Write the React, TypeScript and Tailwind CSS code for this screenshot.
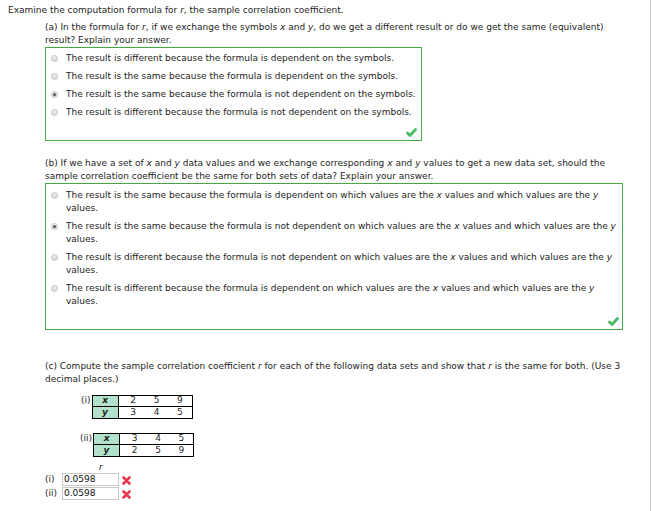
import React from 'react';

const optionsA = [
  { text: 'The result is different because the formula is dependent on the symbols.', checked: false },
  { text: 'The result is the same because the formula is dependent on the symbols.', checked: false },
  { text: 'The result is the same because the formula is not dependent on the symbols.', checked: true },
  { text: 'The result is different because the formula is not dependent on the symbols.', checked: false },
];

const optionsB = [
  { pre: 'The result is the same because the formula is dependent on which values are the ', checked: false },
  { pre: 'The result is the same because the formula is not dependent on which values are the ', checked: true },
  { pre: 'The result is different because the formula is not dependent on which values are the ', checked: false },
  { pre: 'The result is different because the formula is dependent on which values are the ', checked: false },
];

function Radio({ checked }: { checked: boolean }) {
  return (
    <span className="mt-[3px] flex h-[7px] w-[7px] shrink-0 items-center justify-center rounded-full border border-[#c4c4c4] bg-gradient-to-b from-[#f2f2f2] to-[#d6d6d6]">
      {checked && <span className="h-[3px] w-[3px] rounded-full bg-[#555]" />}
    </span>
  );
}

function Check() {
  return (
    <svg width="11" height="9" viewBox="0 0 11 9">
      <path d="M1.5 5 L4 7.5 L9.5 1.5" fill="none" stroke="#4cbb64" strokeWidth="2.8" strokeLinecap="round" strokeLinejoin="round" />
    </svg>
  );
}

function Cross() {
  return (
    <svg width="9" height="9" viewBox="0 0 9 9">
      <path d="M1.5 1.5 L7.5 7.5 M7.5 1.5 L1.5 7.5" stroke="#ea3750" strokeWidth="2.6" strokeLinecap="round" />
    </svg>
  );
}

function DataTable({ xs, ys }: { xs: number[]; ys: number[] }) {
  const row = (label: string, vals: number[], top: boolean) => (
    <div className={`flex h-[11px] ${top ? 'border-b border-black' : ''}`}>
      <div className="flex w-[26px] items-center justify-center border-r border-black bg-[#b3e2cc] font-bold italic">{label}</div>
      <div className="flex flex-1 items-center justify-around pl-[3px]">
        {vals.map((v, i) => (
          <span key={i} className="w-[10px] text-center">{v}</span>
        ))}
      </div>
    </div>
  );
  return (
    <div className="w-[101px] border border-black leading-[11px]">
      {row('x', xs, true)}
      {row('y', ys, false)}
    </div>
  );
}

export default function App() {
  return (
    <div
      className="relative h-[511px] w-[651px] border-r border-[#c4c4c4] bg-white text-[9px] leading-[13px] text-[#1e1e1e]"
      style={{ fontFamily: '"DejaVu Sans", Verdana, sans-serif' }}
    >
      <div className="pl-[8px] pt-[3.5px]">
        Examine the computation formula for <i>r</i>, the sample correlation coefficient.
      </div>

      <div className="ml-[45px] mt-[4px] w-[582px]">
        <p>
          (a) In the formula for <i>r</i>, if we exchange the symbols <i>x</i> and <i>y</i>, do we get a different result or do we get the same (equivalent) result? Explain your answer.
        </p>
        <div className="relative h-[94px] w-[377px] border border-[#45a845] pl-[5px] pt-[4px]">
          <div className="flex flex-col gap-[5px]">
            {optionsA.map((o, i) => (
              <div key={i} className="flex gap-[8px]">
                <Radio checked={o.checked} />
                <span>{o.text}</span>
              </div>
            ))}
          </div>
          <div className="absolute bottom-[3px] right-[4px]">
            <Check />
          </div>
        </div>

        <p className="mt-[16px]">
          (b) If we have a set of <i>x</i> and <i>y</i> data values and we exchange corresponding <i>x</i> and <i>y</i> values to get a new data set, should the sample correlation coefficient be the same for both sets of data? Explain your answer.
        </p>
        <div className="relative h-[147px] w-[578px] border border-[#45a845] pl-[5px] pt-[5px]">
          <div className="flex flex-col gap-[5px]">
            {optionsB.map((o, i) => (
              <div key={i} className="flex gap-[8px]">
                <Radio checked={o.checked} />
                <span className="w-[556px]">
                  {o.pre}
                  <i>x</i> values and which values are the <i>y</i> values.
                </span>
              </div>
            ))}
          </div>
          <div className="absolute bottom-[3px] right-[3px]">
            <Check />
          </div>
        </div>

        <p className="mt-[30px]">
          (c) Compute the sample correlation coefficient <i>r</i> for each of the following data sets and show that <i>r</i> is the same for both. (Use 3 decimal places.)
        </p>

        <div className="mt-[9px] flex items-start leading-[11px]">
          <span className="ml-[36px] mr-[1px]">(i)</span>
          <DataTable xs={[2, 5, 9]} ys={[3, 4, 5]} />
        </div>
        <div className="mt-[14px] flex items-start leading-[11px]">
          <span className="ml-[35px] mr-[1px]">(ii)</span>
          <DataTable xs={[3, 4, 5]} ys={[2, 5, 9]} />
        </div>

        <div className="ml-[54px] mt-[5px] leading-[11px]">
          <i>r</i>
        </div>
        <div className="flex flex-col">
          {['(i)', '(ii)'].map((lbl, i) => (
            <div key={i} className="flex h-[14px] items-center">
              <span className="w-[17px]">{lbl}</span>
              <div className="flex h-[13px] w-[57px] items-center border border-[#c8c8c8] pl-[1px] leading-[11px] text-[#111]">
                0.0598
              </div>
              <span className="ml-[3px] mt-[2px]">
                <Cross />
              </span>
            </div>
          ))}
        </div>
      </div>
    </div>
  );
}
